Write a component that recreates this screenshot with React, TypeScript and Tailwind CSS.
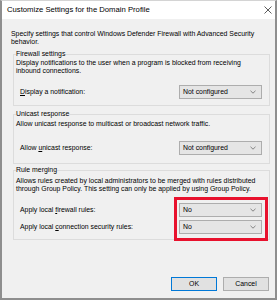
import React from "react";

const FONT = { fontFamily: '"Liberation Sans", Arial, sans-serif' };

function Dropdown({ value }: { value: string }) {
  return (
    <div className="flex h-[14px] w-[83px] items-center justify-between border border-[#adadad] bg-[#e5e5e5] pl-[3px] pr-[5px]">
      <span className="text-[6.9px] leading-[8px] text-black">{value}</span>
      <svg width="6" height="4" viewBox="0 0 6 4" className="shrink-0">
        <path d="M0.5 0.8 L3 3.2 L5.5 0.8" fill="none" stroke="#6b6b6b" strokeWidth="0.8" />
      </svg>
    </div>
  );
}

function Row({ label, value, className = "" }: { label: React.ReactNode; value: string; className?: string }) {
  return (
    <div className={`flex items-center justify-between ${className}`}>
      <span className="ml-[4px] text-[6.9px] leading-[8px]">{label}</span>
      <Dropdown value={value} />
    </div>
  );
}

export default function App() {
  return (
    <div
      className="relative h-[300px] w-[277px] overflow-hidden border-x-2 border-b-2 border-t border-x-[#8e8e8e] border-b-[#8e8e8e] border-t-[#d4d4d4] bg-[#f0f0f0] text-black"
      style={FONT}
    >
      {/* title bar */}
      <div className="flex h-[18px] items-center justify-between bg-white pl-[5px] pr-[3px]">
        <span className="text-[7.7px] leading-[10px]">Customize Settings for the Domain Profile</span>
        <svg width="8" height="8" viewBox="0 0 8 8">
          <path d="M0.5 0.5 L7.5 7.5 M7.5 0.5 L0.5 7.5" stroke="#333" strokeWidth="0.8" />
        </svg>
      </div>

      <div className="pl-[9px] pr-[5px] pt-[11px]">
        <p className="whitespace-nowrap text-[6.9px] leading-[8px]">
          Specify settings that control Windows Defender Firewall with Advanced Security
          <br />
          behavior.
        </p>

        {/* Firewall settings */}
        <fieldset className="ml-[2px] mt-[4px] border border-[#dcdcdc] pb-[6px] pl-[2px] pr-[7px]">
          <legend className="text-[6.9px] leading-[8px]">Firewall settings</legend>
          <p className="mt-[1px] text-[6.9px] leading-[8px]">
            Display notifications to the user when a program is blocked from receiving
            <br />
            inbound connections.
          </p>
          <Row
            className="mt-[10px]"
            label={
              <>
                <u>D</u>isplay a notification:
              </>
            }
            value="Not configured"
          />
        </fieldset>

        {/* Unicast response */}
        <fieldset className="ml-[2px] mt-[4px] border border-[#dcdcdc] pb-[8px] pl-[2px] pr-[7px]">
          <legend className="text-[6.9px] leading-[8px]">Unicast response</legend>
          <p className="mt-[2px] text-[6.9px] leading-[8px]">
            Allow unicast response to multicast or broadcast network traffic.
          </p>
          <Row
            className="mt-[13px]"
            label={
              <>
                Allow <u>u</u>nicast response:
              </>
            }
            value="Not configured"
          />
        </fieldset>

        {/* Rule merging */}
        <fieldset className="ml-[2px] mt-[2px] border border-[#dcdcdc] pb-[5px] pl-[2px] pr-[7px]">
          <legend className="text-[6.9px] leading-[8px]">Rule merging</legend>
          <p className="mt-[3px] whitespace-nowrap text-[6.9px] leading-[8px]">
            Allows rules created by local administrators to be merged with rules distributed
            <br />
            through Group Policy. This setting can only be applied by using Group Policy.
          </p>
          <Row
            className="mt-[10px]"
            label={
              <>
                Apply local <u>f</u>irewall rules:
              </>
            }
            value="No"
          />
          <Row
            className="mt-[3px]"
            label={
              <>
                Apply local <u>c</u>onnection security rules:
              </>
            }
            value="No"
          />
        </fieldset>

        <div className="mt-[37px] flex justify-end gap-[6px] pr-[1px]">
          <button className="flex h-[14px] w-[46px] items-center justify-center border border-[#0078d7] bg-[#e1e1e1] text-[6.9px] leading-[8px]">
            OK
          </button>
          <button className="flex h-[14px] w-[46px] items-center justify-center border border-[#adadad] bg-[#e1e1e1] text-[6.9px] leading-[8px]">
            Cancel
          </button>
        </div>
      </div>

      {/* highlight annotation */}
      <div className="absolute left-[172px] top-[196px] h-[44px] w-[94px] border-[3px] border-[#e8112d]" />
    </div>
  );
}
